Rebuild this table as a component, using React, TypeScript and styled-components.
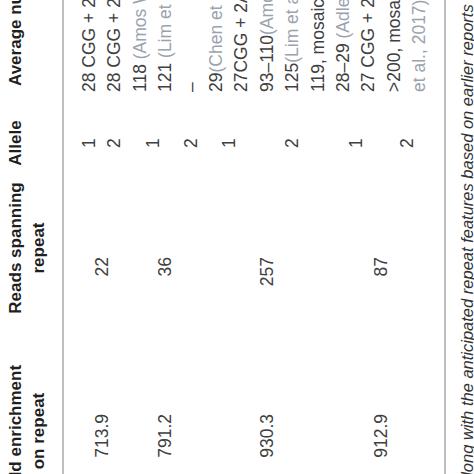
import React from 'react';
import styled, { createGlobalStyle } from 'styled-components';

const Global = createGlobalStyle`
  html, body { margin: 0; padding: 0; background: #ffffff; }
  body { font-family: "Liberation Sans", Arial, Helvetica, sans-serif; }
`;

const Viewport = styled.div`
  width: 474px;
  height: 474px;
  overflow: hidden;
  background: #ffffff;
`;

const Rotated = styled.div`
  width: 474px;
  height: 474px;
  overflow: hidden;
  transform: rotate(-90deg);
  transform-origin: 50% 50%;
`;

const Sheet = styled.div`
  margin-left: -40px;
  width: 760px;
`;

const Table = styled.table`
  border-collapse: collapse;
  table-layout: fixed;
  width: 740px;
  border-bottom: 2px solid #bdbdbd;
`;

type Align = 'left' | 'center' | 'right';

const Th = styled.th<{ $align: Align; $pl?: number }>`
  font-weight: bold;
  font-size: 17px;
  line-height: 23px;
  color: #1f1f1f;
  text-align: ${(p) => p.$align};
  vertical-align: top;
  white-space: nowrap;
  padding: 3.5px 0 12px ${(p) => p.$pl ?? 0}px;
  border-bottom: 2px solid #bdbdbd;
`;

const Td = styled.td<{ $align: Align; $pl?: number; $pr?: number; $top?: boolean; $bottom?: boolean }>`
  font-size: 17.5px;
  line-height: 25.4px;
  color: #404040;
  text-align: ${(p) => p.$align};
  vertical-align: middle;
  white-space: nowrap;
  padding: ${(p) => (p.$top ? 13.5 : 0)}px ${(p) => p.$pr ?? 0}px ${(p) => (p.$bottom ? 11 : 0)}px
    ${(p) => p.$pl ?? 0}px;
`;

const Line = styled.div`
  display: block;
`;

const Ref = styled.span`
  color: #9aa3ad;
`;

const Caption = styled.p`
  margin: 10px 0 0 29px;
  font-style: italic;
  font-size: 16.5px;
  line-height: 23px;
  color: #333333;
  white-space: nowrap;
`;

type Seg = { t: string; ref?: boolean };
type Allele = { n: string; lines: Seg[][] };
type Sample = { fold: string; reads: string; alleles: Allele[] };

const samples: Sample[] = [
  {
    fold: '713.9',
    reads: '22',
    alleles: [
      { n: '1', lines: [[{ t: '28 CGG + 2 AGG' }]] },
      { n: '2', lines: [[{ t: '28 CGG + 2 AGG' }]] },
    ],
  },
  {
    fold: '791.2',
    reads: '36',
    alleles: [
      {
        n: '1',
        lines: [
          [{ t: '118 ' }, { t: '(Amos Wilson et al., 2012)', ref: true }],
          [{ t: '121 ' }, { t: '(Lim et al., 2015)', ref: true }],
        ],
      },
      { n: '2', lines: [[{ t: '–' }]] },
    ],
  },
  {
    fold: '930.3',
    reads: '257',
    alleles: [
      {
        n: '1',
        lines: [
          [{ t: '29' }, { t: '(Chen et al., 2010)', ref: true }],
          [{ t: '27CGG + 2AGG' }],
        ],
      },
      {
        n: '2',
        lines: [
          [{ t: '93–110' }, { t: '(Amos Wilson et al., 2012)', ref: true }],
          [{ t: '125' }, { t: '(Lim et al., 2015)', ref: true }],
          [{ t: '119, mosaic' }],
        ],
      },
    ],
  },
  {
    fold: '912.9',
    reads: '87',
    alleles: [
      {
        n: '1',
        lines: [
          [{ t: '28–29 ' }, { t: '(Adler et al., 2011)', ref: true }],
          [{ t: '27 CGG + 2 AGG' }],
        ],
      },
      {
        n: '2',
        lines: [
          [{ t: '>200, mosaic ' }, { t: '(Loomis', ref: true }],
          [{ t: 'et al., 2017)', ref: true }],
        ],
      },
    ],
  },
];

export default function App() {
  return (
    <>
      <Global />
      <Viewport>
        <Rotated>
          <Sheet>
            <Table>
              <colgroup>
                <col style={{ width: 160 }} />
                <col style={{ width: 180 }} />
                <col style={{ width: 62 }} />
                <col style={{ width: 338 }} />
              </colgroup>
              <thead>
                <tr>
                  <Th $align="center" $pl={6}>
                    Fold enrichment
                    <br />
                    on repeat
                  </Th>
                  <Th $align="center" $pl={32}>
                    Reads spanning
                    <br />
                    repeat
                  </Th>
                  <Th $align="center">Allele</Th>
                  <Th $align="left" $pl={26}>
                    Average number of repeats
                  </Th>
                </tr>
              </thead>
              <tbody>
                {samples.map((s, si) =>
                  s.alleles.map((a, ai) => {
                    const top = si === 0 && ai === 0;
                    const lastSample = si === samples.length - 1;
                    const bottom = lastSample && ai === s.alleles.length - 1;
                    return (
                      <tr key={`${si}-${ai}`}>
                        {ai === 0 && (
                          <Td $align="right" $pr={60} rowSpan={s.alleles.length} $top={top} $bottom={lastSample}>
                            {s.fold}
                          </Td>
                        )}
                        {ai === 0 && (
                          <Td $align="right" $pr={83} rowSpan={s.alleles.length} $top={top} $bottom={lastSample}>
                            {s.reads}
                          </Td>
                        )}
                        <Td $align="center" $top={top} $bottom={bottom}>
                          {a.n}
                        </Td>
                        <Td $align="left" $pl={20} $top={top} $bottom={bottom}>
                          {a.lines.map((ln, li) => (
                            <Line key={li}>
                              {ln.map((seg, gi) => (seg.ref ? <Ref key={gi}>{seg.t}</Ref> : <span key={gi}>{seg.t}</span>))}
                            </Line>
                          ))}
                        </Td>
                      </tr>
                    );
                  })
                )}
              </tbody>
            </Table>
            <Caption>along with the anticipated repeat features based on earlier reports (Table 1).</Caption>
          </Sheet>
        </Rotated>
      </Viewport>
    </>
  );
}
